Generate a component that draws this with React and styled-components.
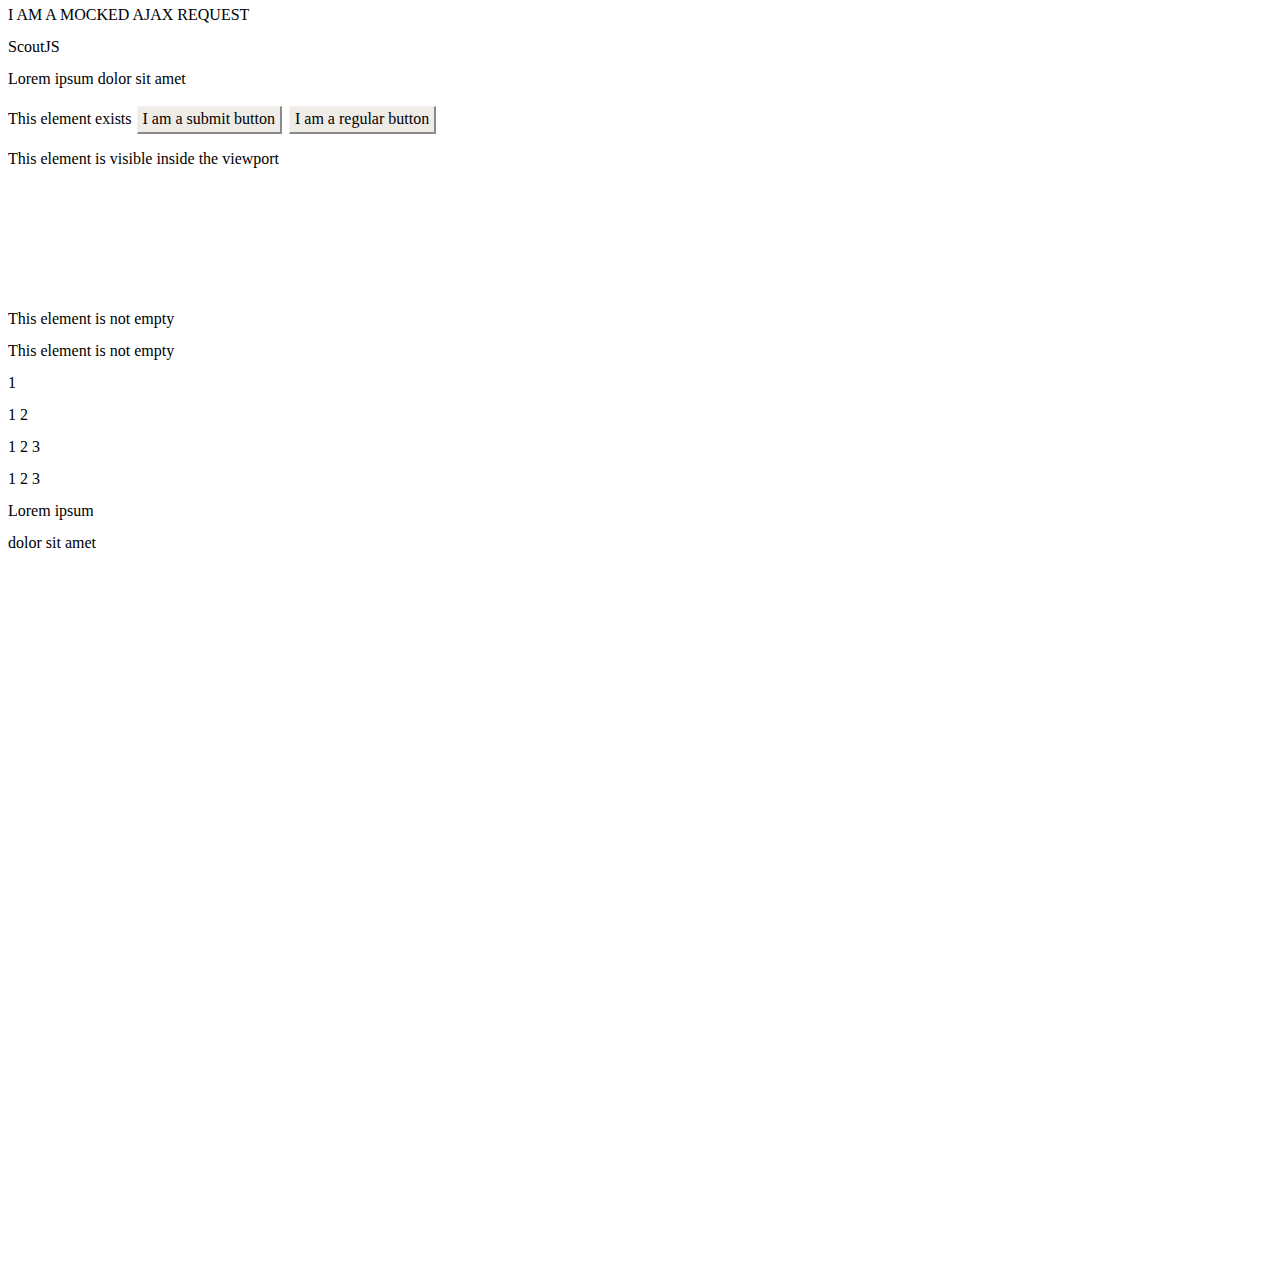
import React from 'react';
import styled, { createGlobalStyle } from 'styled-components';

const GlobalStyle = createGlobalStyle`
  html, body {
    margin: 0;
    padding: 0;
    background: #fff;
  }
`;

const Page = styled.div`
  display: flex;
  flex-direction: column;
  gap: 16px;
  padding: 7px 8px 8px;
  font-family: 'Liberation Serif', 'Times New Roman', serif;
  font-size: 16px;
  line-height: 16px;
  color: #000;
`;

const Line = styled.div`
  height: 16px;
  white-space: nowrap;
`;

const Row = styled.div`
  display: flex;
  align-items: center;
  height: 32px;
  white-space: nowrap;
`;

const Button = styled.button`
  align-self: flex-start;
  font-family: inherit;
  font-size: 16px;
  line-height: 16px;
  height: 28px;
  margin: 3px 0 0 ${props => props.gap || 8}px;
  padding: 0 5px 2px 5px;
  background: #efebe7;
  color: #000;
  border-style: solid;
  border-width: 1px 2px 2px 1px;
  border-color: #f4f2ef #8a8a8a #8a8a8a #f4f2ef;
  border-radius: 0;
  cursor: pointer;
`;

const Spacer = styled.div`
  height: ${props => props.size}px;
`;

export default function App() {
  return (
    <>
      <GlobalStyle />
      <Page>
        <Line>I AM A MOCKED AJAX REQUEST</Line>
        <Line>ScoutJS</Line>
        <Line>Lorem ipsum dolor sit amet</Line>
        <Row>
          This element exists
          <Button type="submit" gap={5}>I am a submit button</Button>
          <Button type="button" gap={7}>I am a regular button</Button>
        </Row>
        <Line>This element is visible inside the viewport</Line>
        <Spacer size={112} />
        <Line>This element is not empty</Line>
        <Line>This element is not empty</Line>
        <Line>1</Line>
        <Line>1 2</Line>
        <Line>1 2 3</Line>
        <Line>1 2 3</Line>
        <Line>Lorem ipsum</Line>
        <Line>dolor sit amet</Line>
      </Page>
    </>
  );
}
